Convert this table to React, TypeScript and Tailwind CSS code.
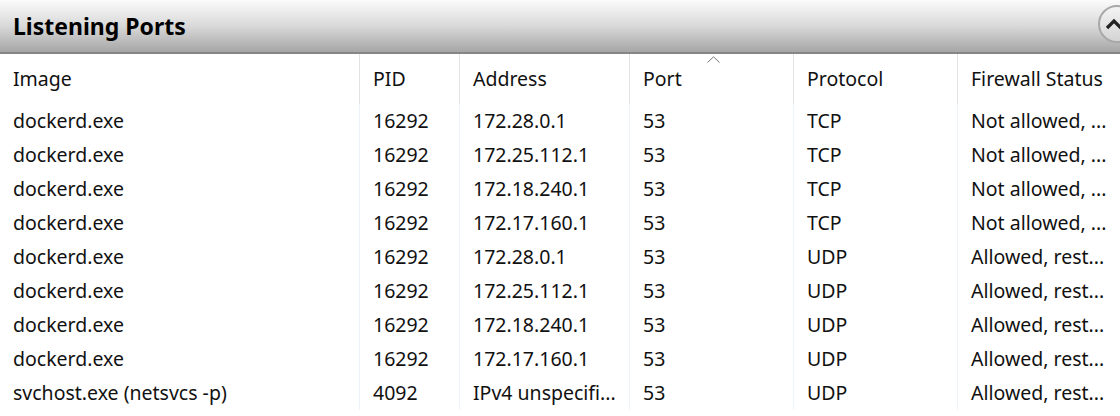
import React from "react";

const rows = [
  ["dockerd.exe", "16292", "172.28.0.1", "53", "TCP", "Not allowed, ..."],
  ["dockerd.exe", "16292", "172.25.112.1", "53", "TCP", "Not allowed, ..."],
  ["dockerd.exe", "16292", "172.18.240.1", "53", "TCP", "Not allowed, ..."],
  ["dockerd.exe", "16292", "172.17.160.1", "53", "TCP", "Not allowed, ..."],
  ["dockerd.exe", "16292", "172.28.0.1", "53", "UDP", "Allowed, rest..."],
  ["dockerd.exe", "16292", "172.25.112.1", "53", "UDP", "Allowed, rest..."],
  ["dockerd.exe", "16292", "172.18.240.1", "53", "UDP", "Allowed, rest..."],
  ["dockerd.exe", "16292", "172.17.160.1", "53", "UDP", "Allowed, rest..."],
  ["svchost.exe (netsvcs -p)", "4092", "IPv4 unspecifi...", "53", "UDP", "Allowed, rest..."],
];

const headers = ["Image", "PID", "Address", "Port", "Protocol", "Firewall Status"];
const gridCols = "grid grid-cols-[359px_100px_170px_164px_164px_1fr]";

export default function App() {
  return (
    <div
      className="w-[1120px] h-[416px] overflow-hidden bg-white text-[#111]"
      style={{ fontFamily: '"Noto Sans", "Open Sans", sans-serif' }}
    >
      {/* title bar */}
      <div className="relative h-[54px] bg-gradient-to-b from-[#fbfbfb] via-[#d9d9d9] to-[#a6a6a6] border-b-2 border-[#858585] flex items-center pl-[13px]">
        <span className="text-[23px] font-bold text-black">Listening Ports</span>
        <div className="absolute left-[1098px] top-[5px] w-[38px] h-[38px] rounded-full border-2 border-[#a8a8a8] bg-gradient-to-b from-[#f4f4f4] to-[#d4d4d4] flex items-center justify-center">
          <svg width="18" height="12" viewBox="0 0 18 12" className="-ml-[6px]">
            <path d="M2 10 L9 3 L16 10" fill="none" stroke="#222" strokeWidth="3.2" />
          </svg>
        </div>
      </div>
      {/* header row */}
      <div className={`${gridCols} h-[50px] text-[19.5px]`}>
        {headers.map((h, i) => (
          <div
            key={h}
            className={`relative flex items-center whitespace-nowrap overflow-hidden ${
              i === 0 ? "pl-[13px]" : "pl-[13px] border-l border-[#e3e3e3]"
            }`}
          >
            {i === 3 && (
              <svg
                width="13"
                height="7"
                viewBox="0 0 13 7"
                className="absolute left-[77px] top-[2px]"
              >
                <path d="M0.5 6.5 L6.5 0.8 L12.5 6.5" fill="none" stroke="#777" strokeWidth="1" />
              </svg>
            )}
            {h}
          </div>
        ))}
      </div>
      {/* body */}
      {rows.map((r, ri) => (
        <div key={ri} className={`${gridCols} h-[34px] text-[19.5px]`}>
          {r.map((c, i) => (
            <div
              key={i}
              className={`flex items-center whitespace-nowrap overflow-hidden ${
                i === 0 ? "pl-[13px]" : "pl-[13px] border-l border-[#eef3fa]"
              }`}
            >
              {c}
            </div>
          ))}
        </div>
      ))}
    </div>
  );
}
